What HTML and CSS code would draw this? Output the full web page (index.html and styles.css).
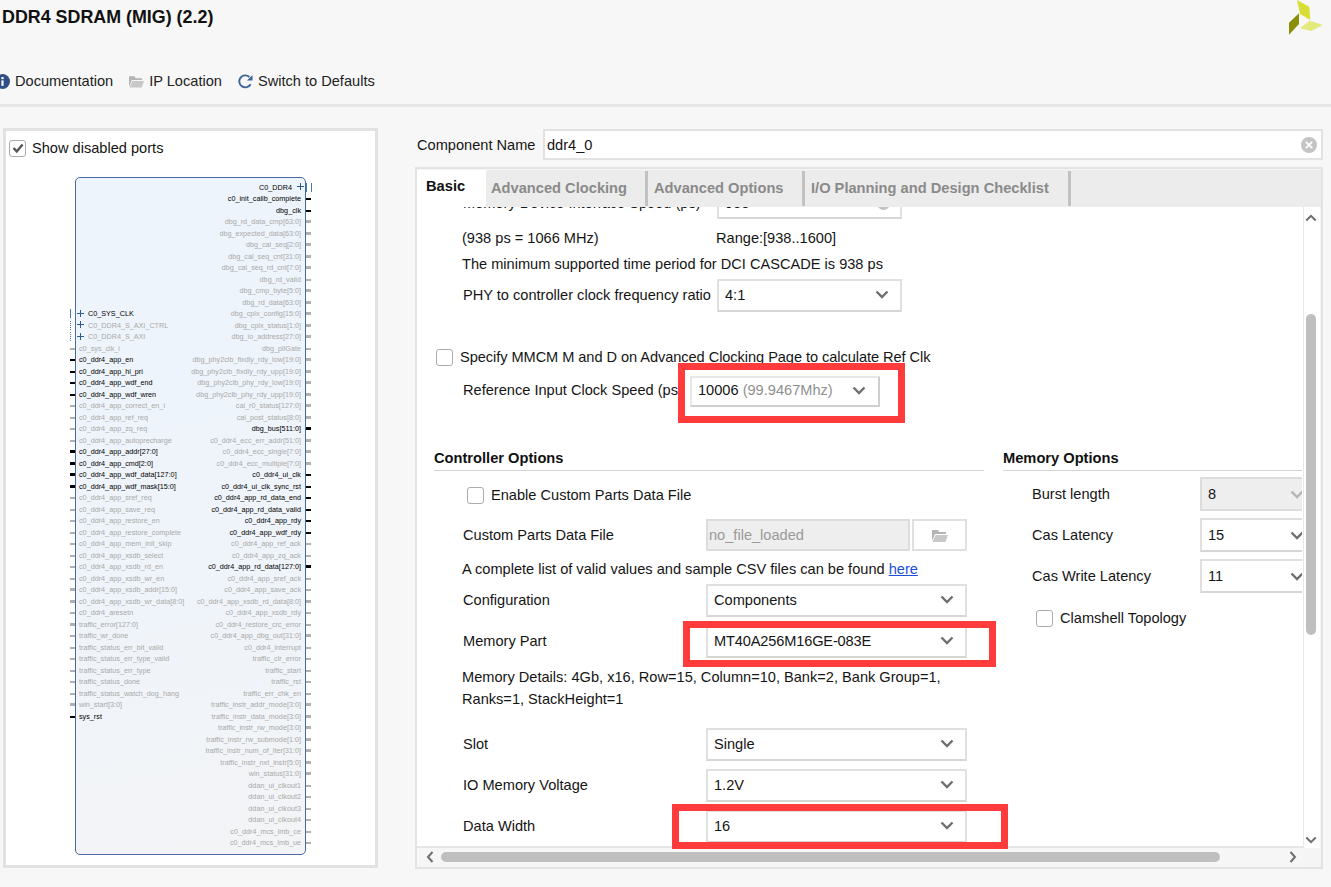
FILE: index.html
```html
<!DOCTYPE html>
<html lang="en">
<head>
<meta charset="utf-8">
<title>DDR4 SDRAM (MIG) (2.2)</title>
<link rel="stylesheet" href="styles.css">
</head>
<body>
<svg class="defs" width="0" height="0" aria-hidden="true">
  <symbol id="chev" viewBox="0 0 14 9"><path d="M1.5 1.5 7 7l5.5-5.5" fill="none" stroke="#6f6f6f" stroke-width="2.4"/></symbol>
  <symbol id="clear" viewBox="0 0 16 16"><circle cx="8" cy="8" r="8" fill="#c4c4c4"/><path d="M4.8 4.8l6.4 6.4M11.2 4.8l-6.4 6.4" stroke="#fff" stroke-width="1.8"/></symbol>
  <symbol id="folder" viewBox="0 0 16 13"><path d="M0 2V1h6l1 2h7v2H3L0 12Z" fill="#b5b5b5"/><path d="M3.5 6H16l-2.5 7H0.5Z" fill="#c8c8c8"/></symbol>
  <symbol id="plus" viewBox="0 0 7 7"><path d="M3.5 0v7M0 3.5h7" fill="none" stroke="#2f5a94" stroke-width="1"/></symbol>
</svg>
<div class="page">
  <header class="head">
    <h1 class="title">DDR4 SDRAM (MIG) (2.2)</h1>
    <svg class="logo" width="34" height="35" viewBox="0 0 34 35">
      <polygon points="8,0 20.3,6.7 21.3,20 11,14" fill="#d9de36"/>
      <polygon points="0,22.7 10,13.3 10,24 0,34.7" fill="#8b8f08"/>
      <polygon points="10.7,28.3 20.7,20.7 34,25 22.3,31" fill="#e4e97c"/>
    </svg>
  </header>
  <nav class="toolbar">
    <span class="tool tool-doc">
      <svg class="info" width="15" height="15" viewBox="0 0 15 15"><circle cx="7.5" cy="7.5" r="7.5" fill="#2f4f86"/><rect x="6.4" y="6.4" width="2.2" height="5.4" fill="#fff"/><rect x="6.4" y="3" width="2.2" height="2.2" fill="#fff"/></svg>
      Documentation
    </span>
    <span class="tool tool-loc">
      <svg class="tool-ico" width="15" height="13"><use href="#folder"/></svg>
      IP Location
    </span>
    <span class="tool tool-sw">
      <svg class="tool-ico" width="15" height="15" viewBox="0 0 15 15"><path d="M12.6 10.2A6 6 0 1 1 11.4 3" fill="none" stroke="#3d6597" stroke-width="1.9"/><path d="M14.5 1v5.6H9Z" fill="#3d6597"/></svg>
      Switch to Defaults
    </span>
  </nav>
  <div class="divider"></div>
  <main class="main">
    <section class="preview">
      <label class="check-row show-ports">
        <span class="cb"><svg width="14" height="12" viewBox="0 0 14 12"><path d="M2.5 6 5.7 9.4 11.6 2.4" fill="none" stroke="#555" stroke-width="2.4"/></svg></span>
        Show disabled ports
      </label>
      <div class="symbol">
        <div class="ports ports-left">
          <div class="port iface on bars"><svg class="plus" width="7" height="7"><use href="#plus"/></svg>C0_SYS_CLK</div>
          <div class="port iface dots"><svg class="plus" width="7" height="7"><use href="#plus"/></svg>C0_DDR4_S_AXI_CTRL</div>
          <div class="port iface dots"><svg class="plus" width="7" height="7"><use href="#plus"/></svg>C0_DDR4_S_AXI</div>
          <div class="port">c0_sys_clk_i</div>
          <div class="port on">c0_ddr4_app_en</div>
          <div class="port on">c0_ddr4_app_hi_pri</div>
          <div class="port on">c0_ddr4_app_wdf_end</div>
          <div class="port on">c0_ddr4_app_wdf_wren</div>
          <div class="port">c0_ddr4_app_correct_en_i</div>
          <div class="port">c0_ddr4_app_ref_req</div>
          <div class="port">c0_ddr4_app_zq_req</div>
          <div class="port">c0_ddr4_app_autoprecharge</div>
          <div class="port on bus">c0_ddr4_app_addr[27:0]</div>
          <div class="port on bus">c0_ddr4_app_cmd[2:0]</div>
          <div class="port on bus">c0_ddr4_app_wdf_data[127:0]</div>
          <div class="port on bus">c0_ddr4_app_wdf_mask[15:0]</div>
          <div class="port">c0_ddr4_app_sref_req</div>
          <div class="port">c0_ddr4_app_save_req</div>
          <div class="port">c0_ddr4_app_restore_en</div>
          <div class="port">c0_ddr4_app_restore_complete</div>
          <div class="port">c0_ddr4_app_mem_init_skip</div>
          <div class="port">c0_ddr4_app_xsdb_select</div>
          <div class="port">c0_ddr4_app_xsdb_rd_en</div>
          <div class="port">c0_ddr4_app_xsdb_wr_en</div>
          <div class="port bus">c0_ddr4_app_xsdb_addr[15:0]</div>
          <div class="port bus">c0_ddr4_app_xsdb_wr_data[8:0]</div>
          <div class="port">c0_ddr4_aresetn</div>
          <div class="port bus">traffic_error[127:0]</div>
          <div class="port">traffic_wr_done</div>
          <div class="port">traffic_status_err_bit_valid</div>
          <div class="port">traffic_status_err_type_valid</div>
          <div class="port">traffic_status_err_type</div>
          <div class="port">traffic_status_done</div>
          <div class="port">traffic_status_watch_dog_hang</div>
          <div class="port bus">win_start[3:0]</div>
          <div class="port on">sys_rst</div>
        </div>
        <div class="ports ports-right">
          <div class="port iface on bars">C0_DDR4<svg class="plus" width="7" height="7"><use href="#plus"/></svg></div>
          <div class="port on">c0_init_calib_complete</div>
          <div class="port on">dbg_clk</div>
          <div class="port bus">dbg_rd_data_cmp[63:0]</div>
          <div class="port bus">dbg_expected_data[63:0]</div>
          <div class="port bus">dbg_cal_seq[2:0]</div>
          <div class="port bus">dbg_cal_seq_cnt[31:0]</div>
          <div class="port bus">dbg_cal_seq_rd_cnt[7:0]</div>
          <div class="port">dbg_rd_valid</div>
          <div class="port bus">dbg_cmp_byte[5:0]</div>
          <div class="port bus">dbg_rd_data[63:0]</div>
          <div class="port bus">dbg_cplx_config[15:0]</div>
          <div class="port bus">dbg_cplx_status[1:0]</div>
          <div class="port bus">dbg_io_address[27:0]</div>
          <div class="port">dbg_pllGate</div>
          <div class="port bus">dbg_phy2clb_fixdly_rdy_low[19:0]</div>
          <div class="port bus">dbg_phy2clb_fixdly_rdy_upp[19:0]</div>
          <div class="port bus">dbg_phy2clb_phy_rdy_low[19:0]</div>
          <div class="port bus">dbg_phy2clb_phy_rdy_upp[19:0]</div>
          <div class="port bus">cal_r0_status[127:0]</div>
          <div class="port bus">cal_post_status[8:0]</div>
          <div class="port on bus">dbg_bus[511:0]</div>
          <div class="port bus">c0_ddr4_ecc_err_addr[51:0]</div>
          <div class="port bus">c0_ddr4_ecc_single[7:0]</div>
          <div class="port bus">c0_ddr4_ecc_multiple[7:0]</div>
          <div class="port on">c0_ddr4_ui_clk</div>
          <div class="port on">c0_ddr4_ui_clk_sync_rst</div>
          <div class="port on">c0_ddr4_app_rd_data_end</div>
          <div class="port on">c0_ddr4_app_rd_data_valid</div>
          <div class="port on">c0_ddr4_app_rdy</div>
          <div class="port on">c0_ddr4_app_wdf_rdy</div>
          <div class="port">c0_ddr4_app_ref_ack</div>
          <div class="port">c0_ddr4_app_zq_ack</div>
          <div class="port on bus">c0_ddr4_app_rd_data[127:0]</div>
          <div class="port">c0_ddr4_app_sref_ack</div>
          <div class="port">c0_ddr4_app_save_ack</div>
          <div class="port bus">c0_ddr4_app_xsdb_rd_data[8:0]</div>
          <div class="port">c0_ddr4_app_xsdb_rdy</div>
          <div class="port">c0_ddr4_restore_crc_error</div>
          <div class="port bus">c0_ddr4_app_dbg_out[31:0]</div>
          <div class="port">c0_ddr4_interrupt</div>
          <div class="port">traffic_clr_error</div>
          <div class="port">traffic_start</div>
          <div class="port">traffic_rst</div>
          <div class="port">traffic_err_chk_en</div>
          <div class="port bus">traffic_instr_addr_mode[3:0]</div>
          <div class="port bus">traffic_instr_data_mode[3:0]</div>
          <div class="port bus">traffic_instr_rw_mode[3:0]</div>
          <div class="port bus">traffic_instr_rw_submode[1:0]</div>
          <div class="port bus">traffic_instr_num_of_iter[31:0]</div>
          <div class="port bus">traffic_instr_nxt_instr[5:0]</div>
          <div class="port bus">win_status[31:0]</div>
          <div class="port">ddan_ui_clkout1</div>
          <div class="port">ddan_ui_clkout2</div>
          <div class="port">ddan_ui_clkout3</div>
          <div class="port">ddan_ui_clkout4</div>
          <div class="port">c0_ddr4_mcs_lmb_ce</div>
          <div class="port">c0_ddr4_mcs_lmb_ue</div>
        </div>
      </div>
    </section>
    <section class="config">
      <div class="name-row">
        <span class="name-label">Component Name</span>
        <div class="name-input">ddr4_0<svg class="clear" width="16" height="16"><use href="#clear"/></svg></div>
      </div>
      <div class="panel">
        <div class="tabs">
          <span class="tab active">Basic</span>
          <span class="tab tab-clock">Advanced Clocking</span>
          <span class="tab tab-opts">Advanced Options</span>
          <span class="tab tab-io">I/O Planning and Design Checklist</span>
        </div>
        <div class="body-row">
          <div class="viewport">
            <div class="content">
              <div class="basic">
                <div class="field h32">
                  <span class="lab w254">Memory Device Interface Speed (ps)</span>
                  <div class="ctl w185">938<svg class="clear clear-sm" width="13" height="13"><use href="#clear"/></svg></div>
                </div>
                <div class="line mt8">
                  <span class="w254b">(938 ps = 1066 MHz)</span><span>Range:[938..1600]</span>
                </div>
                <div class="line mt4">The minimum supported time period for DCI CASCADE is 938 ps</div>
                <div class="field mt4">
                  <span class="lab w254">PHY to controller clock frequency ratio</span>
                  <div class="ctl w185">4:1<svg class="chev" width="14" height="9"><use href="#chev"/></svg></div>
                </div>
                <label class="check-row spec">
                  <span class="cb"></span>
                  Specify MMCM M and D on Advanced Clocking Page to calculate Ref Clk
                </label>
                <div class="field h31 mt9">
                  <span class="lab w227">Reference Input Clock Speed (ps)</span>
                  <div class="ctl ctl-ref">10006&nbsp;<span class="muted">(99.9467Mhz)</span><svg class="chev" width="14" height="9"><use href="#chev"/></svg></div>
                </div>
              </div>
              <div class="groups">
                <section class="ctrl">
                  <h2 class="group-title">Controller Options</h2>
                  <div class="indent">
                    <label class="check-row enable">
                      <span class="cb"></span>
                      Enable Custom Parts Data File
                    </label>
                    <div class="field h32 mt14">
                      <span class="lab w243">Custom Parts Data File</span>
                      <div class="ctl ctl-off w204">no_file_loaded</div>
                      <div class="browse"><svg width="16" height="13"><use href="#folder"/></svg></div>
                    </div>
                    <div class="line mt7">A complete list of valid values and sample CSV files can be found <a class="link" href="#here">here</a></div>
                    <div class="field mt4">
                      <span class="lab w243">Configuration</span>
                      <div class="ctl w261">Components<svg class="chev" width="14" height="9"><use href="#chev"/></svg></div>
                    </div>
                    <div class="field mt8">
                      <span class="lab w243">Memory Part</span>
                      <div class="ctl w261 part">MT40A256M16GE-083E<svg class="chev" width="14" height="9"><use href="#chev"/></svg></div>
                    </div>
                    <p class="details">Memory Details: 4Gb, x16, Row=15, Column=10, Bank=2, Bank Group=1,<br>Ranks=1, StackHeight=1</p>
                    <div class="field mt18">
                      <span class="lab w243">Slot</span>
                      <div class="ctl w261">Single<svg class="chev" width="14" height="9"><use href="#chev"/></svg></div>
                    </div>
                    <div class="field mt8">
                      <span class="lab w243">IO Memory Voltage</span>
                      <div class="ctl w261">1.2V<svg class="chev" width="14" height="9"><use href="#chev"/></svg></div>
                    </div>
                    <div class="field mt8">
                      <span class="lab w243">Data Width</span>
                      <div class="ctl w261">16<svg class="chev" width="14" height="9"><use href="#chev"/></svg></div>
                    </div>
                  </div>
                </section>
                <section class="mem">
                  <h2 class="group-title">Memory Options</h2>
                  <div class="mem-rows">
                    <div class="field h34 mt6">
                      <span class="lab w168">Burst length</span>
                      <div class="ctl ctl-off w130 dark">8<svg class="chev chev-off" width="14" height="9"><use href="#chev"/></svg></div>
                    </div>
                    <div class="field h34 mt7">
                      <span class="lab w168">Cas Latency</span>
                      <div class="ctl w130">15<svg class="chev" width="14" height="9"><use href="#chev"/></svg></div>
                    </div>
                    <div class="field h34 mt7">
                      <span class="lab w168">Cas Write Latency</span>
                      <div class="ctl w130">11<svg class="chev" width="14" height="9"><use href="#chev"/></svg></div>
                    </div>
                    <label class="check-row clam">
                      <span class="cb"></span>
                      Clamshell Topology
                    </label>
                  </div>
                </section>
              </div>
            </div>
          </div>
          <div class="vbar">
            <svg class="v-up" width="12" height="8"><use href="#chev"/></svg>
            <div class="v-thumb"></div>
            <svg class="v-down" width="12" height="8"><use href="#chev"/></svg>
          </div>
        </div>
        <div class="hbar">
          <svg class="h-left" width="8" height="12" viewBox="0 0 8 12"><path d="M6.5 1 2 6l4.5 5" fill="none" stroke="#6f6f6f" stroke-width="2"/></svg>
          <div class="h-thumb"></div>
          <svg class="h-right" width="8" height="12" viewBox="0 0 8 12"><path d="M1.5 1 6 6l-4.5 5" fill="none" stroke="#6f6f6f" stroke-width="2"/></svg>
        </div>
      </div>
    </section>
  </main>
  <div class="mark mark-ref"></div>
  <div class="mark mark-part"></div>
  <div class="mark mark-width"></div>
</div>
</body>
</html>
```
FILE: styles.css
```css
* { box-sizing: border-box; }
html, body { margin: 0; padding: 0; }
body { background: #f7f7f7; font-family: "Liberation Sans", Arial, sans-serif; font-size: 14.6px; color: #151515; overflow: hidden; }
.defs { position: absolute; }
.page { position: relative; width: 1331px; height: 887px; overflow: hidden; }

.head { height: 36px; display: flex; justify-content: space-between; align-items: flex-start; padding: 0 8px 0 2px; }
.title { margin: 7px 0 0; font-size: 17.87px; line-height: 20px; font-weight: 700; color: #111; }

.toolbar { display: flex; align-items: center; height: 20px; margin-top: 35px; color: #222; }
.tool { display: flex; align-items: center; white-space: nowrap; }
.info { margin-right: 5px; margin-left: -5px; flex: none; }
.tool-loc { margin-left: 16px; }
.tool-sw { margin-left: 16px; }
.tool-ico { margin-right: 5px; flex: none; }
.divider { height: 3px; margin-top: 13px; background: #e6e6e6; }

.main { display: flex; align-items: flex-start; padding: 21px 0 0 3px; }
.preview { width: 375px; height: 740px; flex: none; background: #fff; border: 3px solid #e2e2e2; padding: 7px 3px; }
.check-row { display: flex; align-items: center; height: 20px; white-space: nowrap; }
.cb { width: 17px; height: 17px; flex: none; border: 1.5px solid #ababab; border-radius: 3px; background: #fff; display: flex; align-items: center; justify-content: center; margin-right: 7px; }
.show-ports .cb { margin-right: 6px; }

.symbol { width: 231px; height: 678px; margin: 19px 0 0 66px; border: 1.5px solid #47699f; border-radius: 5px; background: linear-gradient(170deg, #edf4fc 0%, #eff4fa 60%, #f3f4f6 100%); display: grid; grid-template-columns: 100%; padding-top: 3.5px; }
.ports { grid-area: 1 / 1; font-family: "Liberation Sans", Arial, sans-serif; font-size: 7.2px; letter-spacing: .02px; color: #a9a9a9; }
.ports-left { padding: 126.5px 0 0 3px; }
.ports-right { text-align: right; padding-right: 4px; }
.port { position: relative; height: 11.5px; line-height: 11.5px; white-space: nowrap; }
.port.on { color: #000; }
.ports-right .port::after, .ports-left .port::before { content: ""; position: absolute; top: 5px; width: 5px; height: 2px; background: #b0b0b0; }
.ports-right .port::after { right: -10px; }
.ports-left .port::before { left: -9px; }
.port.on::after, .port.on::before { background: #000 !important; }
.port.bus::after, .port.bus::before { height: 3px !important; top: 4px !important; }
.plus { vertical-align: -0.5px; }
.ports-left .plus { margin-right: 4px; margin-left: -2px; }
.ports-right .plus { margin-left: 5px; margin-right: -3px; }
.ports .iface::before, .ports .iface::after { background: transparent !important; height: 9px !important; top: 1px !important; width: 4px !important; border-left: 1px solid #4a79ad; border-right: 1px solid #4a79ad; }
.ports .dots::before { border-left-style: dotted; border-right-style: dotted; }
.ports-left .iface::before { left: -9.5px; }
.ports-right .iface::after { right: -11px; }

.config { width: 908px; margin-left: 37px; flex: none; }
.name-row { display: flex; align-items: center; height: 31px; margin-left: 2px; margin-top: 1px; }
.name-label { width: 126px; flex: none; }
.name-input { display: flex; align-items: center; justify-content: space-between; width: 780px; height: 31px; background: #fff; border: 2px solid #e2e2e2; padding: 0 4px 0 2px; }
.clear { flex: none; }

.panel { margin-top: 7px; height: 702px; border: 2px solid #e3e3e3; display: flex; flex-direction: column; background: #f5f5f5; }
.tabs { display: flex; height: 37px; flex: none; background: #ececec; margin-top: 1px; padding-right: 1px; }
.tab { font-weight: 700; font-size: 14.67px; color: #8a8a8a; line-height: 34px; white-space: nowrap; height: 35px; border-right: 3px solid #c2c2c2; padding: 0 17px 0 5px; margin-top: 1px; }
.tab.active { background: #fff; color: #111; height: 37px; margin-top: 0; border-right: 0; width: 69px; padding: 0 0 0 9px; line-height: 32px; }
.tab-clock { width: 162px; padding-right: 0; }
.tab-opts { width: 157px; padding-right: 0; padding-left: 6px; }
.tab-io { width: 266px; padding-right: 0; padding-left: 6px; }

.body-row { display: flex; height: 641px; flex: none; }
.viewport { position: relative; width: 886px; flex: none; overflow: hidden; background: #fff; border-bottom: 2px solid #e6e6e6; }
.content { margin-top: -20px; padding-left: 17px; }
.basic { margin-left: 29px; }
.field { display: flex; align-items: center; height: 33px; white-space: nowrap; }
.h31 { height: 31px; }
.h32 { height: 32px; }
.h34 { height: 34px; }
.mt4 { margin-top: 4px; }
.mt6 { margin-top: 6px; }
.mt7 { margin-top: 7px; }
.mt8 { margin-top: 8px; }
.mt9 { margin-top: 9px; }
.mt14 { margin-top: 14px; }
.mt18 { margin-top: 18px; }
.lab { flex: none; overflow: hidden; white-space: nowrap; padding-bottom: 2px; }
.h32 .lab, .h34 .lab { padding-bottom: 0; }
.h31 .lab { padding-bottom: 4px; }
.w254 { width: 254px; }
.w227 { width: 215px; margin-right: 12px; }
.w243 { width: 243px; }
.w168 { width: 168px; }
.w254b { display: inline-block; width: 254px; }
.line { height: 22px; line-height: 22px; margin-left: -1px; white-space: nowrap; }
.ctl { flex: none; display: flex; align-items: center; justify-content: space-between; height: 100%; padding: 0 11px 2px 6px; background: #fff; border: 2px solid #e0e0e0; border-bottom-color: #d6d6d6; color: #151515; }
.h32 .ctl, .h34 .ctl { padding-bottom: 0; }
.h31 .ctl { padding-bottom: 3px; }
.w185 { width: 185px; }
.w204 { width: 204px; }
.w261 { width: 261px; }
.w130 { width: 130px; flex: none; padding-right: 24px; }
.part { letter-spacing: -.15px; }
.chev { flex: none; }
.clear-sm { margin-right: -1px; }
.ctl-ref { width: 190px; justify-content: flex-start; border-left-color: #e8e8e8; border-top-color: #e8e8e8; border-right-color: #cfcfcf; border-bottom-color: #cfcfcf; }
.ctl-ref .chev { margin-left: auto; margin-right: 1px; }
.muted { color: #8f8f8f; }
.spec { margin: 35px 0 0 -27px; letter-spacing: -.06px; }

.groups { display: flex; margin-top: 41px; }
.group-title { margin: 0; height: 23px; line-height: 20px; font-size: 14.67px; font-weight: 700; color: #111; border-bottom: 1px solid #d4d4d4; }
.ctrl { width: 550px; flex: none; }
.mem { width: 299px; margin-left: 19px; flex: none; overflow: hidden; }
.indent { margin-left: 29px; }
.enable { margin: 14px 0 0 4px; }
.ctl-off { background: #eeeeee; border-color: #dcdcdc; color: #9a9a9a; padding-left: 1px; }
.ctl-off.dark { color: #151515; padding-left: 6px; }
.chev-off { opacity: .45; }
.browse { width: 55px; height: 100%; margin-left: 2px; flex: none; background: #fff; border: 2px solid #e0e0e0; display: flex; align-items: center; justify-content: center; }
.link { color: #1a4fd6; text-decoration: underline; }
.details { margin: 8px 0 0 -1px; line-height: 22px; white-space: nowrap; }
.mem-rows { margin-left: 29px; }
.clam { margin: 15px 0 0 4px; }

.vbar { width: 17px; flex: none; background: #fff; border-left: 1px solid #e8e8e8; display: flex; flex-direction: column; align-items: center; padding: 7px 3px 0 0; }
.v-up { transform: rotate(180deg); flex: none; }
.v-thumb { width: 10px; height: 321px; margin-top: 92px; background: #bfbfbf; border-radius: 5px; flex: none; }
.v-down { margin-top: 201px; flex: none; }
.hbar { height: 19px; flex: none; display: flex; align-items: center; padding: 0 0 2px 9px; background: #f6f6f6; width: 886px; }
.h-thumb { width: 779px; height: 10px; background: #bfbfbf; border-radius: 5px; margin-left: 7px; flex: none; }
.h-right { margin-left: 69px; flex: none; }

.mark { position: absolute; border: 7px solid #ff3b3b; }
.mark-ref { left: 678px; top: 363px; width: 227px; height: 60px; }
.mark-part { left: 683px; top: 621px; width: 313px; height: 46px; }
.mark-width { left: 672px; top: 804px; width: 336px; height: 45px; }
```
